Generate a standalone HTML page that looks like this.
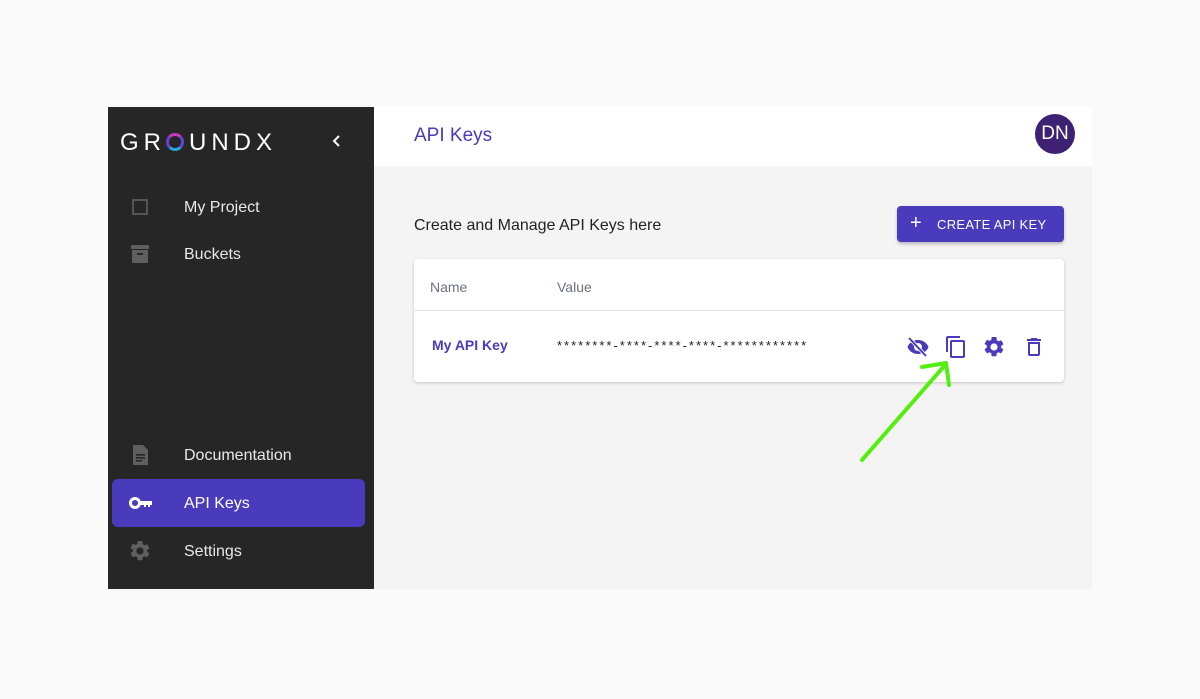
<!DOCTYPE html>
<html><head><style>
body{margin:0;width:1200px;height:699px;background:#fafafa;font-family:"Liberation Sans",sans-serif;position:relative;overflow:hidden}
.a{position:absolute}
.side{left:108px;top:107px;width:266px;height:482px;background:#262626}
.item{position:absolute;left:0;width:266px;height:48px;color:#e8e8e8;font-size:16px}
.item span{position:absolute;left:76px;top:16px}
.item svg{position:absolute;left:20px;top:12px}
</style></head><body>
<div class="a side">
  <div class="a" style="left:12px;top:22px;color:#fff;font-size:24px;letter-spacing:5px;font-weight:300">GR<span style="display:inline-block;border-radius:50%;border:3.5px solid #6a3fd0;border-top-color:#c23ab8;border-right-color:#5b48d8;border-bottom-color:#2aa2d8;vertical-align:-1px;box-sizing:border-box;width:18px;height:18px;margin:0 5px 0 0"></span>UNDX</div>
  <svg class="a" style="left:222px;top:26px" width="14" height="16" viewBox="0 0 14 16"><path d="M9 3 L4 8 L9 13" stroke="#fff" stroke-width="2" fill="none"/></svg>
  <div class="item" style="top:76px"><svg width="24" height="24"><rect x="5" y="5" width="14" height="14" fill="none" stroke="#555" stroke-width="2"/></svg><span>My Project</span></div>
  <div class="item" style="top:123px"><svg width="24" height="24"><rect x="3" y="3" width="18" height="4" fill="#5f5f5f"/><rect x="4" y="8" width="16" height="13" fill="#5f5f5f"/><rect x="9" y="11" width="6" height="2" fill="#262626"/></svg><span>Buckets</span></div>
  <div class="item" style="top:324px"><svg width="24" height="24"><path d="M5 2h10l5 5v15H5z" fill="#5f5f5f"/><rect x="8" y="11" width="9" height="1.6" fill="#262626"/><rect x="8" y="14" width="9" height="1.6" fill="#262626"/><rect x="8" y="17" width="6" height="1.6" fill="#262626"/></svg><span>Documentation</span></div>
  <div class="item" style="top:372px;left:4px;width:253px;background:#4a3bbd;border-radius:6px;color:#fff"><svg width="28" height="24" style="left:16px"><circle cx="7" cy="12" r="4.5" fill="none" stroke="#fff" stroke-width="3"/><path d="M11 10h13v4h-2v2h-2v-2h-2v2h-2v-2h-5z" fill="#fff"/></svg><span style="left:72px">API Keys</span></div>
  <div class="item" style="top:420px"><svg width="24" height="24" viewBox="0 0 24 24"><path fill="#5f5f5f" d="M19.14 12.94c.04-.3.06-.61.06-.94s-.02-.64-.07-.94l2.03-1.58a.49.49 0 00.12-.61l-1.92-3.32a.49.49 0 00-.59-.22l-2.39.96c-.5-.38-1.03-.7-1.62-.94l-.36-2.54A.48.48 0 0013.920 2h-3.84a.48.48 0 00-.48.41l-.36 2.54c-.59.24-1.13.57-1.62.94l-2.39-.96a.48.48 0 00-.59.22L2.74 8.47a.47.47 0 00.12.61l2.03 1.58c-.05.3-.09.63-.09.94s.02.64.07.94l-2.03 1.58a.49.49 0 00-.12.61l1.92 3.32c.12.22.37.29.59.22l2.39-.96c.5.38 1.03.7 1.62.94l.36 2.54c.05.24.24.41.48.41h3.84c.24 0 .44-.17.47-.41l.36-2.54c.59-.24 1.130-.56 1.62-.94l2.39.96c.22.08.47 0 .59-.22l1.92-3.32a.47.47 0 00-.12-.61zM12 15.6A3.6 3.6 0 1115.6 12 3.6 3.6 0 0112 15.6z"/></svg><span>Settings</span></div>
</div>
<div class="a" style="left:374px;top:107px;width:718px;height:59px;background:#fff"></div>
<div class="a" style="left:374px;top:166px;width:718px;height:423px;background:#f4f4f4"></div>
<div class="a" style="left:414px;top:125px;font-size:19px;color:#4a3bbd">API Keys</div>
<div class="a" style="left:1035px;top:114px;width:40px;height:40px;border-radius:50%;background:#3f2174;color:#fff;font-size:19px;text-align:center;line-height:40px">DN</div>
<div class="a" style="left:414px;top:217px;font-size:16px;color:#222">Create and Manage API Keys here</div>
<div class="a" style="left:897px;top:206px;width:167px;height:36px;background:#4a3bbd;border-radius:4px;box-shadow:0 2px 3px rgba(0,0,0,.25);color:#fff;font-size:13px;letter-spacing:.3px;line-height:37px"><span style="position:absolute;left:13px;font-size:20px;top:-1px">+</span><span style="position:absolute;left:40px">CREATE API KEY</span></div>
<div class="a" style="left:414px;top:259px;width:650px;height:123px;background:#fff;border-radius:4px;box-shadow:0 1px 3px rgba(0,0,0,.2)">
  <div class="a" style="left:16px;top:20px;font-size:14px;color:#6b7280">Name</div>
  <div class="a" style="left:143px;top:20px;font-size:14px;color:#6b7280">Value</div>
  <div class="a" style="left:0;top:51px;width:650px;height:1px;background:#e2e2e2"></div>
  <div class="a" style="left:18px;top:78px;font-size:14px;font-weight:bold;color:#4a3bbd">My API Key</div>
  <div class="a" style="left:143px;top:79px;font-size:13px;letter-spacing:2px;color:#222">********-****-****-****-************</div>
  <svg class="a" style="left:492px;top:76px" width="24" height="24" viewBox="0 0 24 24"><path fill="#4a3bbd" d="M12 5C7 5 3 8 1.5 12 3 16 7 19 12 19s9-3 10.5-7C21 8 17 5 12 5zm0 11a4 4 0 110-8 4 4 0 010 8z"/><path d="M3 3l17 18" stroke="#fff" stroke-width="3.5"/><path d="M3 3l17 18" stroke="#4a3bbd" stroke-width="2"/></svg>
  <svg class="a" style="left:530px;top:76px" width="24" height="24" viewBox="0 0 24 24"><path fill="#4a3bbd" d="M16 1H4a2 2 0 00-2 2v14h2V3h12zm3 4H8a2 2 0 00-2 2v14a2 2 0 002 2h11a2 2 0 002-2V7a2 2 0 00-2-2zm0 16H8V7h11z"/></svg>
  <svg class="a" style="left:568px;top:76px" width="24" height="24" viewBox="0 0 24 24"><path fill="#4a3bbd" d="M19.14 12.94c.04-.3.06-.61.06-.94s-.02-.64-.07-.94l2.03-1.58a.49.49 0 00.12-.61l-1.92-3.32a.49.49 0 00-.59-.22l-2.39.96c-.5-.38-1.03-.7-1.62-.94l-.36-2.54A.48.48 0 0013.92 2h-3.84a.48.48 0 00-.48.41l-.36 2.54c-.59.24-1.13.57-1.62.94l-2.39-.96a.48.48 0 00-.59.22L2.74 8.47a.47.47 0 00.12.61l2.03 1.58c-.05.3-.09.63-.09.94s.02.64.07.94l-2.03 1.58a.49.49 0 00-.12.61l1.92 3.32c.12.22.37.29.59.22l2.39-.96c.5.38 1.03.7 1.62.94l.36 2.54c.05.24.24.41.48.41h3.84c.24 0 .44-.17.47-.41l.36-2.54c.59-.24 1.13-.56 1.62-.94l2.39.96c.22.08.47 0 .59-.22l1.92-3.32a.47.47 0 00-.12-.61zM12 15.6A3.6 3.6 0 1115.6 12 3.6 3.6 0 0112 15.6z"/></svg>
  <svg class="a" style="left:608px;top:76px" width="24" height="24" viewBox="0 0 24 24"><path fill="#4a3bbd" d="M6 19a2 2 0 002 2h8a2 2 0 002-2V7H6zm2-10h8v10H8zm7.5-5l-1-1h-5l-1 1H5v2h14V4z"/></svg>
</div>
<svg class="a" style="left:0;top:0" width="1200" height="699"><path d="M862 460L946 364M922 367L946 363L949 385" stroke="#55ee11" stroke-width="4" fill="none" stroke-linecap="round" stroke-linejoin="round"/></svg>
</body></html>
